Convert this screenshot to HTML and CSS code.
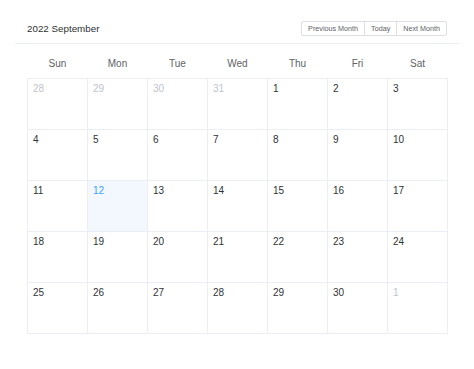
FILE: index.html
```html
<!DOCTYPE html>
<html lang="en">
<head>
  <meta charset="UTF-8" />
  <title>Calendar</title>
  <meta name="viewport" content="width=device-width, initial-scale=1.0" />
  <link rel="stylesheet" href="styles.css">
</head>
<body>
  <div class="calendar">
    <div class="calendar-header">
      <div class="calendar-title">2022 September</div>
      <div class="button-group">
        <button class="btn">Previous Month</button>
        <button class="btn">Today</button>
        <button class="btn">Next Month</button>
      </div>
    </div>

    <div class="calendar-body">
      <table class="calendar-table">
        <thead>
          <tr>
            <th>Sun</th><th>Mon</th><th>Tue</th><th>Wed</th><th>Thu</th><th>Fri</th><th>Sat</th>
          </tr>
        </thead>
        <tbody>
          <tr>
            <td class="prev"><div class="day">28</div></td>
            <td class="prev"><div class="day">29</div></td>
            <td class="prev"><div class="day">30</div></td>
            <td class="prev"><div class="day">31</div></td>
            <td><div class="day">1</div></td>
            <td><div class="day">2</div></td>
            <td><div class="day">3</div></td>
          </tr>
          <tr>
            <td><div class="day">4</div></td>
            <td><div class="day">5</div></td>
            <td><div class="day">6</div></td>
            <td><div class="day">7</div></td>
            <td><div class="day">8</div></td>
            <td><div class="day">9</div></td>
            <td><div class="day">10</div></td>
          </tr>
          <tr>
            <td><div class="day">11</div></td>
            <td class="selected"><div class="day">12</div></td>
            <td><div class="day">13</div></td>
            <td><div class="day">14</div></td>
            <td><div class="day">15</div></td>
            <td><div class="day">16</div></td>
            <td><div class="day">17</div></td>
          </tr>
          <tr>
            <td><div class="day">18</div></td>
            <td><div class="day">19</div></td>
            <td><div class="day">20</div></td>
            <td><div class="day">21</div></td>
            <td><div class="day">22</div></td>
            <td><div class="day">23</div></td>
            <td><div class="day">24</div></td>
          </tr>
          <tr>
            <td><div class="day">25</div></td>
            <td><div class="day">26</div></td>
            <td><div class="day">27</div></td>
            <td><div class="day">28</div></td>
            <td><div class="day">29</div></td>
            <td><div class="day">30</div></td>
            <td class="next"><div class="day">1</div></td>
          </tr>
        </tbody>
      </table>
    </div>
  </div>
</body>
</html>
```

FILE: styles.css
```css
body {
  font-family: "Liberation Sans", Arial, sans-serif;
  background-color: #fff;
  margin: 0;
  padding: 0;
}
.calendar {
  width: 444px;
  margin: 14px 15px 0;
  background-color: #fff;
}
.calendar-header {
  display: flex;
  justify-content: space-between;
  align-items: center;
  padding: 7px 12px;
  border-bottom: 1px solid #ebeef5;
}
.calendar-title {
  font-size: 9.8px;
  color: #303133;
}
.button-group {
  display: flex;
}
.btn {
  font-family: inherit;
  font-size: 7.2px;
  color: #606266;
  background-color: #fff;
  border: 1px solid #dcdfe6;
  height: 15px;
  line-height: 13px;
  padding: 0 6px;
  margin: 0;
  box-sizing: border-box;
  cursor: pointer;
}
.btn + .btn {
  margin-left: -1px;
}
.btn:first-child {
  border-radius: 2px 0 0 2px;
}
.btn:last-child {
  border-radius: 0 2px 2px 0;
}
.calendar-body {
  padding: 7px 11px 21px 12px;
}
.calendar-table {
  width: 100%;
  table-layout: fixed;
  border-collapse: collapse;
  border-spacing: 0;
}
.calendar-table th {
  font-weight: normal;
  font-size: 10px;
  color: #606266;
  padding: 6px 0 8px;
  line-height: 13px;
}
.calendar-table td {
  border-right: 1px solid #ebeef5;
  border-bottom: 1px solid #ebeef5;
  vertical-align: top;
  padding: 0;
}
.calendar-table tbody tr:first-child td {
  border-top: 1px solid #ebeef5;
}
.calendar-table td:first-child {
  border-left: 1px solid #ebeef5;
}
.day {
  height: 50px;
  box-sizing: border-box;
  padding: 4px 5px;
  font-size: 10px;
  line-height: 12px;
  color: #303133;
}
.prev .day, .next .day {
  color: #c0c4cc;
}
.selected .day {
  background-color: #f2f8fe;
  color: #409eff;
}
```
